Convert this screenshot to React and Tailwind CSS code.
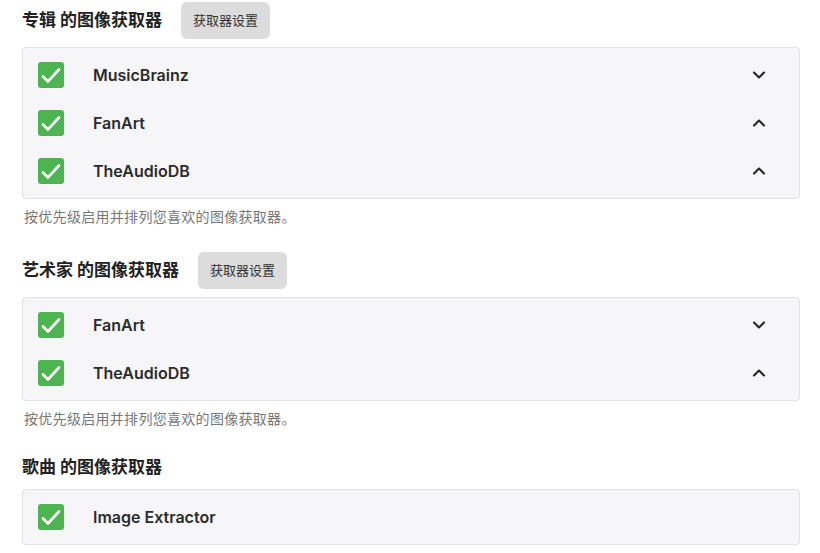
import React, { useState } from "react";
import { ChevronDown, ChevronUp } from "lucide-react";

const FONT = { fontFamily: "Inter, 'Noto Sans CJK SC', sans-serif" };

const initial = {
  album: [
    { name: "MusicBrainz", on: true, dir: "down" },
    { name: "FanArt", on: true, dir: "up" },
    { name: "TheAudioDB", on: true, dir: "up" },
  ],
  artist: [
    { name: "FanArt", on: true, dir: "down" },
    { name: "TheAudioDB", on: true, dir: "up" },
  ],
  song: [{ name: "Image Extractor", on: true, dir: null }],
};

function Check({ on, onClick }) {
  return (
    <button
      onClick={onClick}
      className={`w-[26px] h-[26px] rounded-[3px] flex items-center justify-center ${on ? "bg-[#4cb551]" : "bg-white border border-gray-300"}`}
    >
      {on && (
        <svg width="26" height="26" viewBox="0 0 26 26" fill="none" stroke="white" strokeWidth="2.6" strokeLinecap="round" strokeLinejoin="round">
          <path d="M5 14.5l5 5L21 7.5" />
        </svg>
      )}
    </button>
  );
}

function FetcherList({ items, onToggle }) {
  return (
    <div className="bg-[#f6f6f8] border border-[#e3e3e6] rounded-[4px] py-[3px]">
      {items.map((it, i) => (
        <div key={i} className="h-[48px] flex items-center pl-[15px] pr-[30px]">
          <Check on={it.on} onClick={() => onToggle(i)} />
          <span className="ml-[29px] text-[16px] font-semibold text-[#2b2b2b] flex-1">{it.name}</span>
          {it.dir === "down" && <ChevronDown className="w-5 h-5 text-[#222]" strokeWidth={2.5} />}
          {it.dir === "up" && <ChevronUp className="w-5 h-5 text-[#222]" strokeWidth={2.5} />}
        </div>
      ))}
    </div>
  );
}

function Header({ title, button }) {
  return (
    <div className={`flex items-center mb-2 ${button ? "h-[37px]" : "h-[26px]"}`}>
      <h2 className="text-[17px] font-bold text-[#222]">{title}</h2>
      {button && (
        <button className="ml-[19px] h-[37px] px-[12px] rounded-[6px] bg-[#dcdcdc] text-[13px] text-[#333]">
          获取器设置
        </button>
      )}
    </div>
  );
}

export default function App() {
  const [lists, setLists] = useState(initial);

  const toggle = (key) => (i) =>
    setLists((l) => ({
      ...l,
      [key]: l[key].map((it, j) => (j === i ? { ...it, on: !it.on } : it)),
    }));

  return (
    <div className="bg-white pl-[22px] pr-[20px] pt-[2px] w-[820px] h-[553px] overflow-hidden" style={FONT}>
      {/* Album */}
      <Header title="专辑 的图像获取器" button />
      <FetcherList items={lists.album} onToggle={toggle("album")} />
      <p className="mt-[9px] ml-[2px] text-[14px] leading-[18px] tracking-[0.3px] text-[#777]">按优先级启用并排列您喜欢的图像获取器。</p>

      {/* Artist */}
      <div className="mt-[26px]">
        <Header title="艺术家 的图像获取器" button />
        <FetcherList items={lists.artist} onToggle={toggle("artist")} />
        <p className="mt-[9px] ml-[2px] text-[14px] leading-[18px] tracking-[0.3px] text-[#777]">按优先级启用并排列您喜欢的图像获取器。</p>
      </div>

      {/* Song */}
      <div className="mt-[27px]">
        <Header title="歌曲 的图像获取器" />
        <FetcherList items={lists.song} onToggle={toggle("song")} />
      </div>
    </div>
  );
}
